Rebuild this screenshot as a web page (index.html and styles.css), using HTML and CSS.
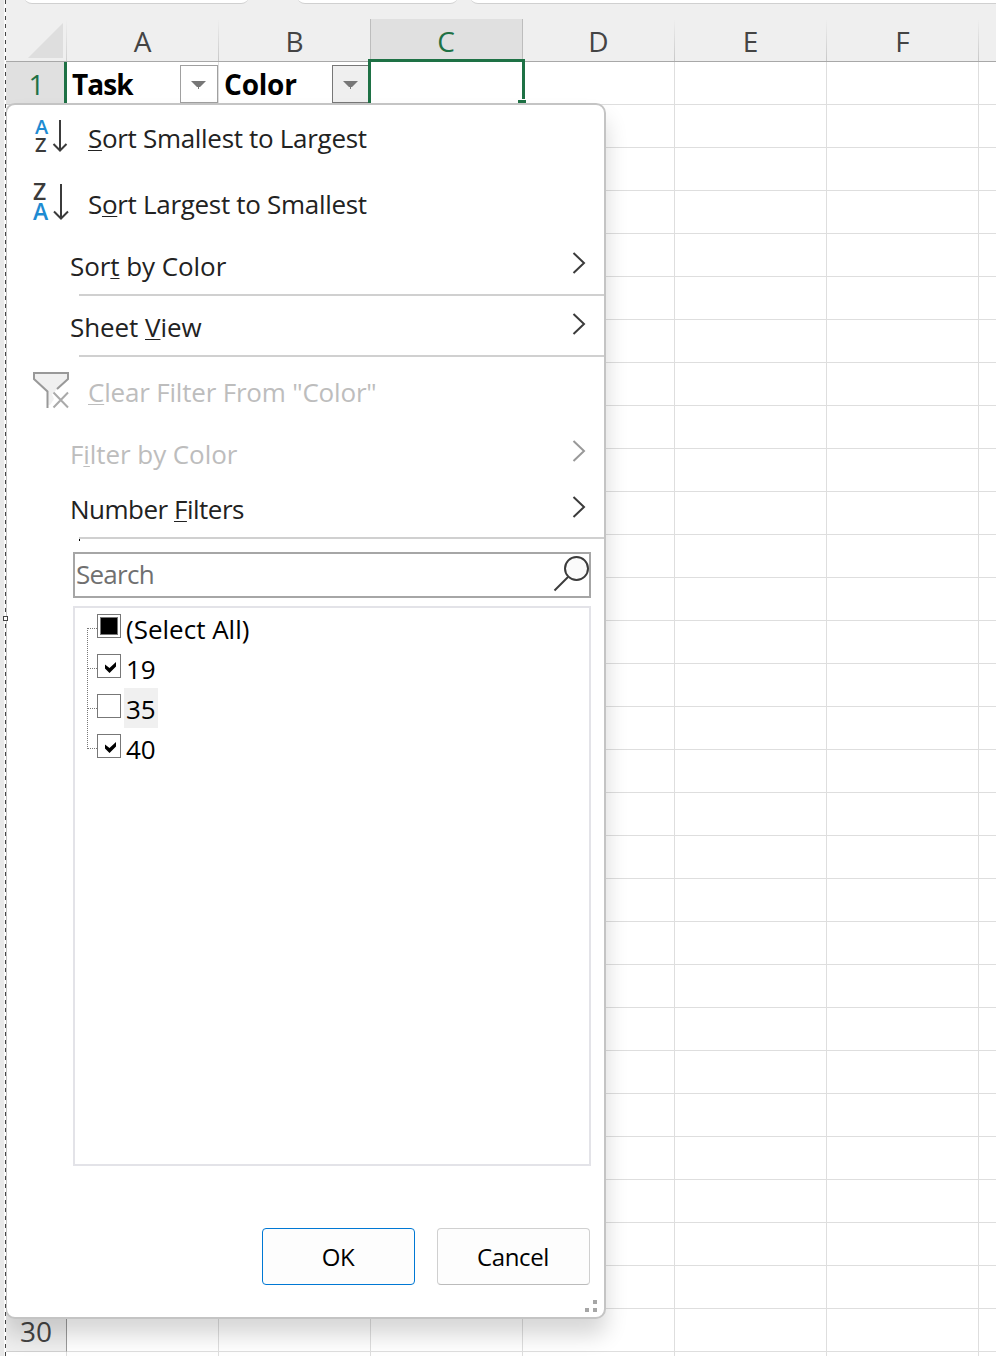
FILE: index.html
```html
<!DOCTYPE html>
<html lang="en">
<head>
	<meta charset="utf-8">
	<title>Filter menu</title>
	<link rel="stylesheet" href="styles.css">
</head>
<body>
	<div class="window">
		<div class="edge"><span class="edge-handle"></span></div>
		<div class="sheet">
			<div class="formula-bar">
				<div class="bar-box name-box"></div>
				<div class="bar-box tools-box"></div>
				<div class="bar-box formula-box"></div>
			</div>
			<div class="row columns">
				<div class="corner"><svg width="35" height="35"><path d="M0 35H35V0Z" fill="#dedede"/></svg></div>
				<div class="column">A</div>
				<div class="column">B</div>
				<div class="column active">C</div>
				<div class="column">D</div>
				<div class="column">E</div>
				<div class="column">F</div>
				<div class="column"></div>
			</div>
			<div class="row">
				<div class="row-number active">1</div>
				<div class="cell title"><span class="task">Task</span><div class="drop"><svg width="16" height="8"><path d="M0 0H15L9 6H8V8H7V6H6Z" fill="#777"/></svg></div></div>
				<div class="cell title"><span class="color">Color</span><div class="drop pressed"><svg width="16" height="8"><path d="M0 0H15L9 6H8V8H7V6H6Z" fill="#777"/></svg></div></div>
				<div class="cell"><div class="selection"></div></div>
				<div class="cell"></div>
				<div class="cell"></div>
				<div class="cell"></div>
				<div class="cell"></div>
			</div>
			<div class="blank-rows"></div>
			<div class="row">
				<div class="row-number">30</div>
				<div class="cell"></div>
				<div class="cell"></div>
				<div class="cell"></div>
				<div class="cell"></div>
				<div class="cell"></div>
				<div class="cell"></div>
				<div class="cell"></div>
			</div>
			<div class="blank-rows last"></div>
		</div>

		<div class="menu">
			<div class="item sort">
				<svg class="icon" width="40" height="40" viewBox="0 0 40 40">
					<text x="5" y="16" class="az blue">A</text>
					<text x="5" y="34" class="az">Z</text>
					<path d="M30 2V32.500M23.500 26L30 32.500L36.500 26" class="arrow"/>
				</svg>
				<span class="label t-small"><u>S</u>ort Smallest to Largest</span>
			</div>
			<div class="item sort">
				<svg class="icon" width="40" height="40" viewBox="0 0 40 40">
					<text x="3" y="16" class="az big">Z</text>
					<text x="3" y="36" class="az big blue">A</text>
					<path d="M31 0V34.500M24 27.500L31 34.500L38 27.500" class="arrow"/>
				</svg>
				<span class="label t-large">S<u>o</u>rt Largest to Smallest</span>
			</div>
			<div class="item sub by-color">
				<span class="label t-sortcolor">Sor<u>t</u> by Color</span>
				<svg class="chevron" width="14" height="22"><path d="M1.500 1L12 11L1.500 21"/></svg>
			</div>
			<div class="line"></div>
			<div class="item sub view">
				<span class="label t-view">Sheet <u>V</u>iew</span>
				<svg class="chevron" width="14" height="22"><path d="M1.500 1L12 11L1.500 21"/></svg>
			</div>
			<div class="line"></div>
			<div class="item clear disabled">
				<svg class="icon" width="40" height="40" viewBox="0 1 40 40">
					<path d="M4 2H38V8L22 23L24 28L20 34H18V21L4 8Z" fill="#f0f0f0"/>
					<path d="M17.500 37V20.500L4 8V2H38V8L27 18" fill="none" stroke="#999" stroke-width="2"/>
					<path d="M23.500 21.500L38 36.500M38 21.500L23.500 36.500" stroke="#aaa" stroke-width="2"/>
				</svg>
				<span class="label t-clear"><u>C</u>lear Filter From "Color"</span>
			</div>
			<div class="item sub disabled">
				<span class="label t-filter">F<u>i</u>lter by Color</span>
				<svg class="chevron" width="14" height="22"><path d="M1.500 1L12 11L1.500 21"/></svg>
			</div>
			<div class="item sub number">
				<span class="label t-number">Number <u>F</u>ilters</span>
				<svg class="chevron" width="14" height="22"><path d="M1.500 1L12 11L1.500 21"/></svg>
			</div>
			<div class="line dot"></div>

			<div class="search">
				<span class="t-search">Search</span>
				<svg width="36" height="38"><circle cx="23.500" cy="14.500" r="11.500" fill="#fafafa"/><path d="M15 23L1.500 36.500"/></svg>
			</div>

			<div class="list">
				<div class="option"><span class="check some"></span><span class="value t-all">(Select All)</span></div>
				<div class="option"><span class="check"><svg width="12" height="11"><path d="M0 2.500L4.500 6L11 0V4.500L4.500 11L0 6.500Z"/></svg></span><span class="value">19</span></div>
				<div class="option"><span class="check"></span><span class="value hot">35</span></div>
				<div class="option"><span class="check"><svg width="12" height="11"><path d="M0 2.500L4.500 6L11 0V4.500L4.500 11L0 6.500Z"/></svg></span><span class="value">40</span></div>
			</div>

			<div class="buttons">
				<button class="button ok">OK</button>
				<button class="button cancel">Cancel</button>
			</div>
			<svg class="grip" width="12" height="12"><path d="M8 0h4v4h-4zM0 8h4v4h-4zM8 8h4v4h-4z" fill="#a6a6a6"/></svg>
		</div>
	</div>
</body>
</html>
```

FILE: styles.css
```css
* {
	box-sizing: border-box;
}

body {
	margin: 0;
	font-family: "Open Sans", "Noto Sans", sans-serif;
	font-size: 26px;
	color: #222;
	background: white;
}

svg {
	display: block;
	flex: none;
	overflow: visible;
}

.window {
	position: relative;
	display: flex;
	width: 996px;
	height: 1356px;
	overflow: hidden;
}

/* dashed strip on the left side */
.edge {
	position: relative;
	z-index: 3;
	flex: none;
	width: 6px;
	background: repeating-linear-gradient(#444 0 4px, #fff 4px 8px) right 0 top 0 / 1px 100% no-repeat,
		linear-gradient(90deg, #e8e8e8 0 4px, #f8f8f8 4px);
}

.edge-handle {
	position: absolute;
	left: 3px;
	top: 616px;
	width: 5px;
	height: 5px;
	border: 1px solid #444;
	background: white;
}

.sheet {
	flex: none;
	width: 1125px;
}

.formula-bar {
	display: flex;
	height: 19px;
	padding-left: 18px;
	background: #efefef;
}

.bar-box {
	height: 12px;
	margin-top: -8px;
	background: white;
	border-bottom: 1px solid #d0d0d0;
	border-radius: 0 0 8px 8px;
}

.name-box {
	width: 225px;
}

.tools-box {
	width: 161px;
	margin-left: 48px;
}

.formula-box {
	width: 560px;
	margin-left: 12px;
}

.row {
	display: flex;
	height: 43px;
}

.columns {
	background: #efefef;
	border-bottom: 1px solid #a8a8a8;
}

.corner {
	width: 61px;
	padding: 4px 0 0 22px;
	background: linear-gradient(#efefef, #d0d0d0) right / 1px 100% no-repeat;
}

.column {
	width: 152px;
	padding-right: 1px;
	font-size: 28px;
	line-height: 44px;
	text-align: center;
	color: #444;
	background: linear-gradient(#efefef, #c8c8c8) right / 1px 100% no-repeat;
}

.column.active {
	width: 153px;
	margin-left: -1px;
	color: #1e7145;
	background: #e0e0e0;
	border: 1px solid #bdbdbd;
	border-width: 0 1px;
}

.row-number {
	width: 61px;
	font-size: 28px;
	line-height: 44px;
	text-align: center;
	color: #444;
	background: #efefef;
	border-right: 1px solid #999;
	border-bottom: 1px solid #d0d0d0;
}

.row-number.active {
	padding-left: 3px;
	color: #1e7145;
	background: #e0e0e0;
	border-right: 3px solid #1e7145;
}

.cell {
	position: relative;
	display: flex;
	justify-content: space-between;
	width: 152px;
	border-right: 1px solid #dedede;
	border-bottom: 1px solid #dedede;
}

.title {
	padding-left: 5px;
	font-size: 28px;
	font-weight: bold;
	line-height: 44px;
	color: black;
}

.task {
	letter-spacing: -0.9px;
}

.color {
	letter-spacing: -0.2px;
}

.drop {
	display: flex;
	flex: none;
	justify-content: center;
	width: 38px;
	height: 38px;
	margin-top: 3px;
	padding-top: 15px;
	background: white;
	border: 1px solid #a0a0a0;
}

.drop.pressed {
	background: #efefef;
	border-color: #777;
}

.selection {
	position: absolute;
	z-index: 1;
	left: -3px;
	top: -3px;
	width: 157px;
	height: 48px;
	border: 3px solid #1e7145;
}

.selection::after {
	content: "";
	position: absolute;
	right: -4px;
	top: 37px;
	width: 8px;
	height: 5px;
	background: #1e7145;
	border-top: 1px solid white;
}

.blank-rows {
	height: 1204px;
	background: linear-gradient(90deg, transparent 151px, #dedede 151px) 61px 0 / 152px 100%,
		linear-gradient(transparent 42px, #dedede 42px) 0 0 / 100% 43px;
}

.blank-rows.last {
	height: 4px;
}

/* filter menu */
.menu {
	position: absolute;
	z-index: 2;
	left: 5px;
	top: 103px;
	width: 601px;
	height: 1216px;
	background: white;
	border: 2px solid #c4c4c4;
	border-radius: 10px;
	box-shadow: 0 16px 22px rgba(0, 0, 0, 0.16);
}

.item {
	display: flex;
	align-items: center;
	height: 55px;
	padding-right: 18px;
}

.sort {
	height: 66px;
	padding-left: 23px;
}

.icon {
	margin-right: 18px;
}

.by-color {
	height: 57px;
}

.sub {
	justify-content: space-between;
	padding-left: 63px;
}

.view {
	height: 59px;
	padding-top: 2px;
}

.clear {
	height: 69px;
	padding-left: 23px;
}

.number {
	height: 56px;
}

.label {
	white-space: nowrap;
}

.label u {
	text-decoration-thickness: 1px;
	text-underline-offset: 2px;
	text-decoration-skip-ink: none;
}

.t-small,
.t-large {
	letter-spacing: -0.31px;
}

.t-sortcolor,
.t-view,
.t-filter {
	letter-spacing: -0.07px;
}

.t-clear {
	letter-spacing: -0.19px;
}

.t-number {
	letter-spacing: -0.5px;
}

.disabled {
	color: #bdbdbd;
}

.az {
	font-size: 20px;
	font-weight: 600;
	fill: #3b3b3b;
}

.az.big {
	font-size: 23px;
}

.az.blue {
	fill: #1e8bd2;
}

.arrow,
.chevron path {
	fill: none;
	stroke: #3b3b3b;
	stroke-width: 2;
}

.chevron {
	margin-top: -5px;
}

.disabled .chevron path {
	stroke: #999;
}

.line {
	height: 2px;
	margin-left: 72px;
	background: #d0d0d0;
}

.line.dot::after {
	content: "";
	display: block;
	position: relative;
	top: 2px;
	width: 1px;
	height: 2px;
	background: black;
}

.search {
	display: flex;
	justify-content: space-between;
	width: 518px;
	height: 46px;
	margin: 13px 0 8px 66px;
	padding-left: 1px;
	line-height: 40px;
	color: #707070;
	border: 2px solid #a6a6a6;
}

.t-search {
	letter-spacing: -0.75px;
}

.search svg {
	fill: none;
	stroke: #3b3b3b;
	stroke-width: 2;
}

.list {
	position: relative;
	width: 518px;
	height: 560px;
	margin-left: 66px;
	padding-left: 22px;
	border: 2px solid #e3e3e8;
}

/* tree line */
.list::before {
	content: "";
	position: absolute;
	left: 12px;
	top: 20px;
	height: 121px;
	border-left: 1px dotted #777;
}

.option {
	position: relative;
	display: flex;
	height: 40px;
	color: black;
}

.option::before {
	content: "";
	position: absolute;
	left: -10px;
	top: 20px;
	width: 10px;
	border-top: 1px dotted #777;
}

.check {
	display: flex;
	align-items: center;
	justify-content: center;
	width: 24px;
	height: 24px;
	margin-top: 6px;
	padding: 2px 0 0 4px;
	border: 1px solid #777;
}

.check.some {
	padding: 0;
}

.check.some::before {
	content: "";
	width: 16px;
	height: 16px;
	background: black;
	border: 1px solid #777;
}

.value {
	height: 40px;
	margin-left: 3px;
	padding: 0 2px;
	line-height: 42px;
}

.hot {
	background: #f0f0f0;
}

.buttons {
	display: flex;
	justify-content: flex-end;
	gap: 22px;
	margin: 62px 14px 0 0;
}

.button {
	width: 153px;
	height: 57px;
	padding: 0 1px 0 0;
	font: 24px "Open Sans", "Noto Sans", sans-serif;
	letter-spacing: -0.4px;
	color: black;
	background: #fdfdfd;
	border: 1px solid #d0d0d0;
	border-bottom-color: #bbb;
	border-radius: 4px;
}

.button.ok {
	border-color: #0078d4;
}

.grip {
	margin: 15px 0 0 578px;
}
```
